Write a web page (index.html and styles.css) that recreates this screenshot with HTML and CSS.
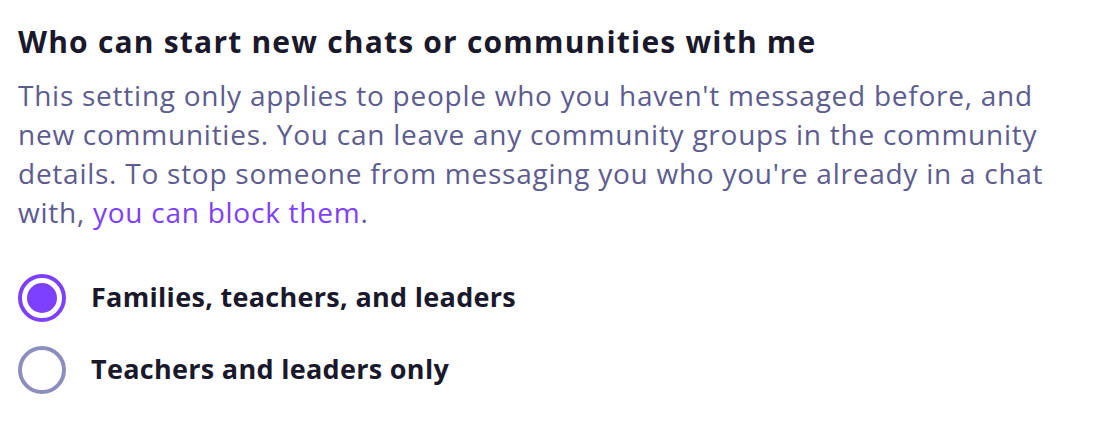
FILE: index.html
```html
<!DOCTYPE html>
<html lang="en">
<head>
<meta charset="utf-8">
<title>Chat settings</title>
<link rel="stylesheet" href="styles.css">
</head>
<body>
<section class="setting">
  <h2 class="setting-title">Who can start new chats or communities with me</h2>
  <p class="setting-desc">This setting only applies to people who you haven't messaged before, and new communities. You can leave any community groups in the community details. To stop someone from messaging you who you're already in a chat with, <a href="#" class="setting-link">you can block them</a>.</p>
  <div class="options" role="radiogroup">
    <label class="option">
      <input type="radio" name="who" class="option-input" checked>
      <span class="option-radio"></span>
      <span class="option-label">Families, teachers, and leaders</span>
    </label>
    <label class="option">
      <input type="radio" name="who" class="option-input">
      <span class="option-radio"></span>
      <span class="option-label">Teachers and leaders only</span>
    </label>
  </div>
</section>
</body>
</html>
```
FILE: styles.css
```css
html, body {
  margin: 0;
  background: #ffffff;
}

body {
  font-family: "Open Sans", "Noto Sans", sans-serif;
}

.setting {
  padding: 22px 18px 0 18px;
  width: 1060px;
}

.setting-title {
  margin: 0;
  font-size: 30px;
  line-height: 40px;
  font-weight: 700;
  letter-spacing: 1.2px;
  color: #1a192b;
}

.setting-desc {
  margin: 14px 0 0 0;
  font-size: 28px;
  line-height: 39px;
  letter-spacing: 0.75px;
  color: #5d5c8f;
}

.setting-link {
  color: #7d40ff;
  text-decoration: none;
}

.options {
  display: flex;
  flex-direction: column;
  gap: 24px;
  margin-top: 42px;
}

.option {
  display: flex;
  align-items: center;
  gap: 25px;
  cursor: pointer;
}

.option-input {
  position: absolute;
  opacity: 0;
  pointer-events: none;
}

.option-radio {
  box-sizing: border-box;
  width: 48px;
  height: 48px;
  border-radius: 50%;
  border: 4px solid #8e8ebe;
  flex: none;
  display: flex;
  align-items: center;
  justify-content: center;
}

.option-input:checked + .option-radio {
  border-color: #7d40ff;
}

.option-input:checked + .option-radio::after {
  content: "";
  width: 30px;
  height: 30px;
  border-radius: 50%;
  background: #7d40ff;
}

.option-label {
  font-size: 27px;
  line-height: 45px;
  padding-bottom: 3px;
  font-weight: 700;
  letter-spacing: 0.3px;
  color: #1a192b;
}
```
